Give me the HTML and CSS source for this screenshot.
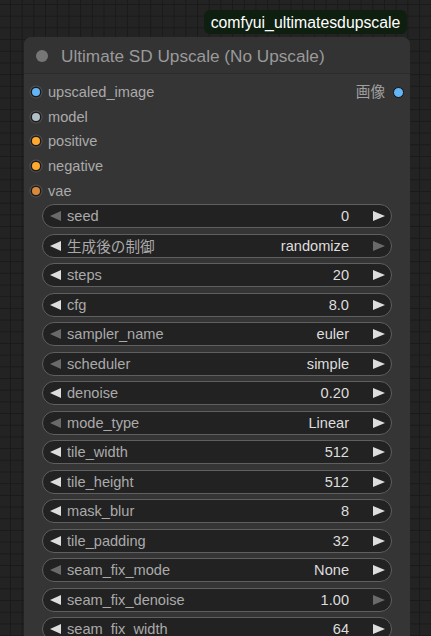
FILE: index.html
```html
<!DOCTYPE html>
<html>
<head>
<meta charset="utf-8">
<link rel="stylesheet" href="styles.css">
</head>
<body>
<div class="canvas">
  <div class="badge">comfyui_ultimatesdupscale</div>
  <div class="node">
    <div class="title"><span class="tdot"></span><span class="ttext">Ultimate SD Upscale (No Upscale)</span></div>
    <div class="body">
      <div class="io">
        <div class="inputs">
          <div class="irow"><span class="dot c-image"></span>upscaled_image</div>
          <div class="irow"><span class="dot c-model"></span>model</div>
          <div class="irow"><span class="dot c-cond"></span>positive</div>
          <div class="irow"><span class="dot c-cond"></span>negative</div>
          <div class="irow"><span class="dot c-vae"></span>vae</div>
        </div>
        <div class="outputs">
          <div class="orow"><span class="otext">画像</span><span class="odot"></span></div>
        </div>
      </div>
      <div class="widgets">
        <div class="w"><span class="al dim"></span><span class="lab">seed</span><span class="val">0</span><span class="ar"></span></div>
        <div class="w"><span class="al"></span><span class="lab">生成後の制御</span><span class="val">randomize</span><span class="ar dim"></span></div>
        <div class="w"><span class="al"></span><span class="lab">steps</span><span class="val">20</span><span class="ar"></span></div>
        <div class="w"><span class="al"></span><span class="lab">cfg</span><span class="val">8.0</span><span class="ar"></span></div>
        <div class="w"><span class="al dim"></span><span class="lab">sampler_name</span><span class="val">euler</span><span class="ar"></span></div>
        <div class="w"><span class="al dim"></span><span class="lab">scheduler</span><span class="val">simple</span><span class="ar"></span></div>
        <div class="w"><span class="al"></span><span class="lab">denoise</span><span class="val">0.20</span><span class="ar"></span></div>
        <div class="w"><span class="al dim"></span><span class="lab">mode_type</span><span class="val">Linear</span><span class="ar"></span></div>
        <div class="w"><span class="al"></span><span class="lab">tile_width</span><span class="val">512</span><span class="ar"></span></div>
        <div class="w"><span class="al"></span><span class="lab">tile_height</span><span class="val">512</span><span class="ar"></span></div>
        <div class="w"><span class="al"></span><span class="lab">mask_blur</span><span class="val">8</span><span class="ar"></span></div>
        <div class="w"><span class="al"></span><span class="lab">tile_padding</span><span class="val">32</span><span class="ar"></span></div>
        <div class="w"><span class="al dim"></span><span class="lab">seam_fix_mode</span><span class="val">None</span><span class="ar"></span></div>
        <div class="w"><span class="al"></span><span class="lab">seam_fix_denoise</span><span class="val">1.00</span><span class="ar dim"></span></div>
        <div class="w"><span class="al"></span><span class="lab">seam_fix_width</span><span class="val">64</span><span class="ar"></span></div>
      </div>
    </div>
  </div>
</div>
</body>
</html>
```
FILE: styles.css
```css
html, body {
  margin: 0;
  padding: 0;
  width: 431px;
  height: 636px;
  overflow: hidden;
  background: #222222;
}
.canvas {
  position: relative;
  width: 431px;
  height: 636px;
  overflow: hidden;
  font-family: "Liberation Sans", Arial, "Noto Sans CJK JP", sans-serif;
  background-color: #232323;
  background-image:
    linear-gradient(to right, #1a1a1a 1px, transparent 1px),
    linear-gradient(to bottom, #1a1a1a 1px, transparent 1px);
  background-size: 11.7px 11.7px;
  background-position: 10px 4px;
}
.badge {
  position: absolute;
  left: 204px;
  top: 10px;
  width: 203px;
  height: 24px;
  box-sizing: border-box;
  background: #0e1f10;
  border-radius: 6px;
  color: #ffffff;
  font-size: 15.8px;
  line-height: 25px;
  text-align: center;
}
.node {
  position: absolute;
  left: 24px;
  top: 37px;
  width: 386px;
  height: 720px;
  background: #353535;
  border-radius: 8px;
  overflow: hidden;
}
.title {
  height: 37px;
  box-sizing: border-box;
  display: flex;
  align-items: center;
  padding-left: 12px;
  padding-top: 2px;
  background: #333333;
  border-bottom: 1px solid #2b2b2b;
}
.tdot {
  width: 12px;
  height: 12px;
  border-radius: 50%;
  background: #767676;
}
.ttext {
  margin-left: 13px;
  color: #9a9a9a;
  font-size: 17.2px;
}
.body {
  padding-top: 6px;
}
.io {
  display: flex;
  justify-content: space-between;
}
.irow, .orow {
  height: 24.6px;
  display: flex;
  align-items: center;
  color: #aaaaaa;
  font-size: 14.6px;
}
.irow .dot {
  width: 8px;
  height: 8px;
  border-radius: 50%;
  margin-left: 8px;
  margin-right: 8px;
  box-shadow: 0 0 0 1.5px #1c1c1c, 0 0 0 2.5px #555;
}
.c-image { background: #64b5f6; }
.c-model { background: #b0bec5; }
.c-cond { background: #ffa931; }
.c-vae { background: #d8893d; }
.orow {
  padding-right: 6px;
  color: #a0a0a0;
}
.otext {
  margin-top: -3px;
}
.odot {
  width: 9px;
  height: 9px;
  border-radius: 50%;
  background: #64b5f6;
  border: 1.5px solid #111;
  margin-left: 8px;
}
.widgets {
  padding: 1.5px 18px 0;
  display: flex;
  flex-direction: column;
  gap: 5.5px;
}
.w {
  height: 24px;
  box-sizing: border-box;
  border: 1.2px solid #5f5f5f;
  border-radius: 12px;
  background: #222222;
  display: flex;
  align-items: center;
  padding: 0 6px 0 7px;
  font-size: 14.6px;
}
.al, .ar {
  width: 0;
  height: 0;
  border-top: 5.5px solid transparent;
  border-bottom: 5.5px solid transparent;
}
.al {
  border-right: 11px solid #dddddd;
}
.ar {
  border-left: 12px solid #dddddd;
}
.al.dim { border-right-color: #6a6a6a; }
.ar.dim { border-left-color: #6a6a6a; }
.lab {
  margin-left: 6px;
  color: #aaaaaa;
  white-space: nowrap;
}
.val {
  flex: 1;
  text-align: right;
  color: #dddddd;
  margin-right: 24px;
  white-space: nowrap;
}
```
